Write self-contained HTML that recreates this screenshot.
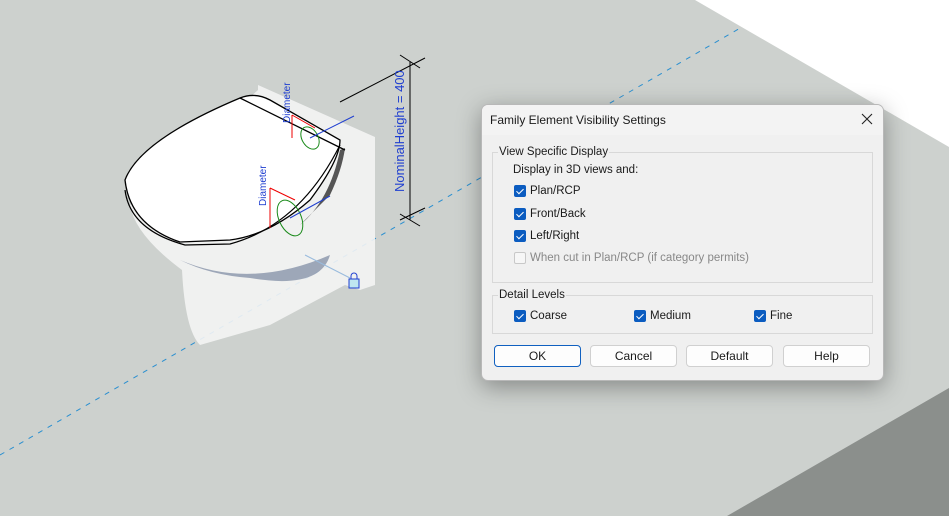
<!DOCTYPE html>
<html><head><meta charset="utf-8"><style>
body{margin:0;width:949px;height:516px;overflow:hidden;position:relative;background:#cdd1ce;font-family:"Liberation Sans",sans-serif}
.dlg{position:absolute;left:481px;top:104px;width:401px;height:275px;background:#f0f0f0;border:1px solid #b8b8b8;border-radius:7px;box-shadow:0 6px 24px rgba(0,0,0,.35);font-size:11.5px;color:#1a1a1a;overflow:hidden}
.tb{height:30px;background:#f3f3f3;position:relative}
.tb span{position:absolute;left:8px;top:8px;font-size:12px}
.x{position:absolute;right:9px;top:7px;width:14px;height:14px}
.grp{position:absolute;border:1px solid #d8d8d8}
.lg{position:absolute;background:#f0f0f0;padding:0 1px}
.cb{position:absolute;width:12px;height:12px;background:#0b5cc0;border-radius:2px}
.cb:after{content:"";position:absolute;left:4px;top:1.5px;width:3px;height:6px;border:solid #fff;border-width:0 1.3px 1.3px 0;transform:rotate(45deg)}
.cb.off{background:#f6f6f6;border:1px solid #c8c8c8;width:10px;height:10px}
.cb.off:after{display:none}
.t{position:absolute}
.btn{position:absolute;top:240px;width:85px;height:20px;background:#fdfdfd;border:1px solid #d0d0d0;border-radius:4px;text-align:center;line-height:20px;font-size:12px}
</style></head><body>
<svg width="949" height="516" style="position:absolute;left:0;top:0">
<polygon points="695,0 949,0 949,147" fill="#fff"/>
<polygon points="949,388 949,516 727,516" fill="#8b8f8c"/>
<line x1="0" y1="455" x2="742" y2="27" stroke="#2a8fd0" stroke-dasharray="5,6" stroke-width="1"/>
<path d="M258,85 L375,137 L375,285 L360,290 L345,285 L270,325 L200,345 Q185,330 182,270 Q135,235 130,205 L258,90Z" fill="#f4f4f4" opacity=".9"/>
<path d="M180,260 Q250,290 330,255 Q320,290 250,278 Q210,275 180,260Z" fill="#5a6a8a" opacity=".55"/>
<path d="M340,150 Q330,200 300,225 L330,195 Q342,170 345,148Z" fill="#555"/>
<path d="M125,180 Q140,140 240,98 Q255,92 270,100 L340,140 Q340,160 310,200 Q270,235 230,240 L180,242 Q130,225 125,180Z" fill="#fff" stroke="#000" stroke-width="1.3"/>
<path d="M125,190 Q130,230 185,245 L230,244 Q300,225 340,145" fill="none" stroke="#000" stroke-width="1.2"/>
<path d="M240,98 L345,150" stroke="#000" stroke-width="1.3"/>
<line x1="410" y1="62" x2="410" y2="220" stroke="#000"/>
<line x1="340" y1="102" x2="425" y2="58" stroke="#000"/>
<line x1="400" y1="55" x2="420" y2="68" stroke="#000"/><line x1="400" y1="214" x2="420" y2="226" stroke="#000"/>
<line x1="400" y1="220" x2="425" y2="208" stroke="#000"/>
<text transform="translate(404,192) rotate(-90)" font-size="13" fill="#1f3fd0" font-family="Liberation Sans">NominalHeight = 400</text>
<text transform="translate(290,123) rotate(-90)" font-size="10" fill="#1f3fd0" font-family="Liberation Sans">Diameter</text>
<text transform="translate(266,206) rotate(-90)" font-size="10" fill="#1f3fd0" font-family="Liberation Sans">Diameter</text>
<ellipse cx="310" cy="138" rx="8" ry="12" transform="rotate(-30 310 138)" fill="none" stroke="#1a8a1a"/>
<ellipse cx="290" cy="218" rx="11" ry="19" transform="rotate(-25 290 218)" fill="none" stroke="#1a8a1a"/>
<path d="M292,115 L292,138 M292,115 L315,128" stroke="#e00" fill="none"/>
<path d="M270,188 L270,228 M270,188 L295,200" stroke="#e00" fill="none"/>
<line x1="310" y1="138" x2="354" y2="116" stroke="#1f3fd0"/>
<line x1="290" y1="218" x2="330" y2="196" stroke="#1f3fd0"/>
<line x1="305" y1="255" x2="350" y2="278" stroke="#9bd"/>
<rect x="349" y="279" width="10" height="9" fill="#bfe6f0" stroke="#1f3fd0"/>
<path d="M351,279 v-3 a3,3 0 0 1 6,0 v3" fill="none" stroke="#1f3fd0"/>
</svg>
<div class="dlg">
<div class="tb"><span>Family Element Visibility Settings</span><svg class="x" viewBox="0 0 14 14"><path d="M2,2 L12,12 M12,2 L2,12" stroke="#222" stroke-width="1.1"/></svg></div>
<div class="grp" style="left:10px;top:47px;width:379px;height:129px"></div>
<div class="lg" style="left:16px;top:41px">View Specific Display</div>
<div class="t" style="left:31px;top:59px">Display in 3D views and:</div>
<div class="cb" style="left:32px;top:80px"></div><div class="t" style="left:48px;top:80px">Plan/RCP</div>
<div class="cb" style="left:32px;top:103px"></div><div class="t" style="left:48px;top:103px">Front/Back</div>
<div class="cb" style="left:32px;top:125px"></div><div class="t" style="left:48px;top:125px">Left/Right</div>
<div class="cb off" style="left:32px;top:147px"></div><div class="t" style="left:48px;top:147px;color:#888">When cut in Plan/RCP (if category permits)</div>
<div class="grp" style="left:10px;top:190px;width:379px;height:37px"></div>
<div class="lg" style="left:16px;top:184px">Detail Levels</div>
<div class="cb" style="left:32px;top:205px"></div><div class="t" style="left:48px;top:205px">Coarse</div>
<div class="cb" style="left:152px;top:205px"></div><div class="t" style="left:168px;top:205px">Medium</div>
<div class="cb" style="left:272px;top:205px"></div><div class="t" style="left:288px;top:205px">Fine</div>
<div class="btn" style="left:12px;border-color:#1060c0">OK</div>
<div class="btn" style="left:108px">Cancel</div>
<div class="btn" style="left:204px">Default</div>
<div class="btn" style="left:301px">Help</div>
</div>
</body></html>
